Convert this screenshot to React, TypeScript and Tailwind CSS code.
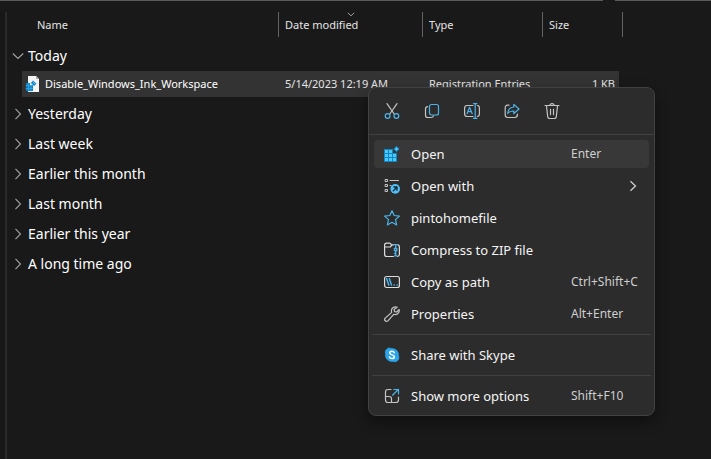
import type { ReactNode } from "react";

const groups = ["Yesterday", "Last week", "Earlier this month", "Last month", "Earlier this year", "A long time ago"];

const BLUE = "#4cb4ea";
const GREY = "#c4c4c4";

function Svg({ children, className = "" }: { children: ReactNode; className?: string }) {
  return (
    <svg viewBox="0 0 16 16" fill="none" strokeLinecap="round" strokeLinejoin="round" aria-hidden="true" className={`size-4 shrink-0 ${className}`}>
      {children}
    </svg>
  );
}

const CutIcon = () => (
  <Svg>
    <path d="M3 .7 10.2 11M13 .7 5.8 11" stroke={GREY} strokeWidth="1.2" />
    <circle cx="3.6" cy="13" r="2.4" stroke={BLUE} strokeWidth="1.2" />
    <circle cx="12.4" cy="13" r="2.4" stroke={BLUE} strokeWidth="1.2" />
  </Svg>
);

const CopyIcon = () => (
  <Svg>
    <path d="M3.6 3.6C1.900 3.800 1.500 4.600 1.500 6v6.200c0 1.600.9 2.300 2.400 2.300H7c1.400 0 2.200-.6 2.500-1.700" stroke={GREY} strokeWidth="1.200" />
    <rect x="5.500" y="1.500" width="9" height="10.500" rx="2" stroke={BLUE} strokeWidth="1.200" />
  </Svg>
);

const RenameIcon = () => (
  <Svg>
    <path d="M9 2.500H3.200C1.500 2.500.6 3.300.6 4.900v5.800c0 1.600.9 2.800 2.600 2.800H9M13.300 2.500c1.400.1 2.100 1 2.100 2.500v5.700c0 1.500-.7 2.700-2.100 2.800" stroke={GREY} strokeWidth="1.200" />
    <path d="m3 10.700 2.600-6.400 2.600 6.400M3.900 8.600h3.400" stroke={BLUE} strokeWidth="1.200" />
    <path d="M9.500.6h3.400M11.200.6v14.800M9.500 15.400h3.400" stroke={BLUE} strokeWidth="1.200" />
  </Svg>
);

const ShareIcon = () => (
  <Svg>
    <path d="M5 2.200H3.600C2 2.200 1.200 3.100 1.200 4.700v7.100c0 1.700.8 2.700 2.400 2.700h7.200c1.700 0 2.600-1 2.600-2.700V11" stroke={GREY} strokeWidth="1.200" />
    <path d="M9.800 1.400 15 6l-5.200 4.500V8C7 7.900 5 8.700 3.600 10.500 3.900 6.900 6.100 4.400 9.800 4V1.400Z" stroke={BLUE} strokeWidth="1.200" />
  </Svg>
);

const DeleteIcon = () => (
  <Svg>
    <path d="M1 2.500h14M5.900 2.500C5.900 1.400 6.700.6 8 .6s2.100.8 2.100 1.900M2.500 3l1.200 10.600c.1 1.100.8 1.900 1.800 1.900h5c1 0 1.700-.8 1.800-1.900L13.500 3M6.500 6.400v5.200M9.500 6.400v5.200" stroke={GREY} strokeWidth="1.200" />
  </Svg>
);

const OpenIcon = () => (
  <Svg>
    <path d="M0 3h9v4h4v9H0z" fill="#0f86c8" />
    <path d="M1 4h3v3H1zM5 4h3v3H5zM1 8h3v3H1zM5 8h3v3H5zM9 8h3v3H9zM1 12h3v3H1zM5 12h3v3H5zM9 12h3v3H9z" fill="#4cc8f5" />
    <path d="m12.500 0 3 3-3 3-3-3z" fill="#1796dc" />
    <path d="m12.500 1.500 1.500 1.500-1.500 1.500L11 3z" fill="#5fd0fa" />
  </Svg>
);

const OpenWithIcon = () => (
  <Svg>
    <path d="M1.500 1.500h2v2h-2zM1.500 6.500h2v2h-2zM1.500 11.500h2v2h-2z" stroke={GREY} />
    <path d="M6 2.500h8.500M6 7.500h1" stroke={GREY} />
    <circle cx="11.200" cy="10.900" r="4.800" fill="#4fc0f8" />
    <path d="m9.300 12.900 3.600-3.700M9.900 9h3.100v3.200" stroke="#17222a" strokeWidth="1.300" />
  </Svg>
);

const StarIcon = () => (
  <Svg>
    <path d="m8 .7 2.200 4.800 5.200.6-3.900 3.500 1.100 5.300L8 12.300l-4.600 2.600 1.100-5.300L.6 6.100l5.200-.6L8 .7Z" stroke={BLUE} strokeWidth="1.200" />
  </Svg>
);

const ZipIcon = () => (
  <Svg>
    <path d="M.6 5h5.600l1.700-1.900M9.500 2.900H7.600L6.500 1.700C6.200 1.400 5.700 1.200 5.200 1.200H2.600C1.300 1.200.6 2 .6 3.200v9c0 1.400.8 2.300 2.200 2.300h6.500M13.900 2.900c1 .2 1.500.9 1.500 2v7.300c0 1.300-.6 2.200-1.800 2.300" stroke="#dcdcdc" strokeWidth="1.200" />
    <path d="M10.200 2.700h3M11.700 2.700v3.500M10.400 6.500h2.400v2.200h-2.400zM11.700 9v4.200M10.400 11.300h1.200M10.400 13.800h2.600" stroke={BLUE} strokeWidth="1.300" />
  </Svg>
);

const PathIcon = () => (
  <Svg>
    <rect x=".6" y="2.500" width="14.800" height="11" rx="2" stroke="#dcdcdc" strokeWidth="1.200" />
    <path d="m2.600 4.600 2.200 6.500M5.300 4.600l2.200 6.500" stroke={BLUE} strokeWidth="1.500" />
    <path d="M10 11h.3M13 11h.3" stroke={BLUE} strokeWidth="1.500" />
  </Svg>
);

const WrenchIcon = () => (
  <Svg>
    <path d="M13.200 1.300c-2.900-1.400-6 .7-5.800 3.800 0 .5.100.9.300 1.300L1.200 12.100c-1.700 1.700.9 4.500 2.700 2.700L9.700 8.300c3.100 1.100 6.100-1.700 5.500-4.800l-2.600 2.500-2.100-.4-.5-2.100 3.200-2.200Z" stroke={GREY} strokeWidth="1.200" />
  </Svg>
);

const SkypeIcon = () => (
  <Svg>
    <path d="M5.200 1.100A4.200 4.200 0 0 0 1.500 6.800 6.500 6.500 0 0 0 9 14.400a4.200 4.200 0 0 0 5.600-5.500A6.600 6.600 0 0 0 7.100 1.500a4.200 4.200 0 0 0-1.900-.4Z" fill="#2aa5ea" stroke="#2aa5ea" strokeWidth=".6" />
    <path d="M10.300 5.700C9.900 4.700 9 4.300 8 4.300c-1.300 0-2.300.6-2.300 1.700 0 2.400 4.700 1.300 4.700 3.700 0 1.200-1 1.900-2.400 1.900-1.200 0-2.200-.5-2.500-1.600" stroke="#fff" strokeWidth="1.500" />
  </Svg>
);

const MoreIcon = () => (
  <Svg>
    <path d="M7 1.500H3.900C2.200 1.500 1.500 2.500 1.500 4v7.700c0 1.700.8 2.800 2.500 2.800h7.800c1.600 0 2.700-1.100 2.700-2.800V9M1.700 8.500h3.500c1.400 0 2.300.7 2.300 2.200v3.600" stroke={GREY} strokeWidth="1.200" />
    <path d="M8.500 7.200 14.300 1.500M9.800 1.500h4.700V6" stroke={BLUE} strokeWidth="1.200" />
  </Svg>
);

const RegFileIcon = () => (
  <Svg>
    <path d="M3 0h8l3 3v13H3z" fill="#f4f4f4" />
    <path d="M11 0v3h3z" fill="#a9a9a9" />
    <path d="M1 7h4v2h3v6H1z" fill="#0b7fc4" />
    <path d="M1 9.500h7M1 12.500h7M3.500 7v8M6 9v6" stroke="#3fb4e8" strokeWidth=".6" />
    <path d="m8 4.500 3.500 3.300-2.400 2.200-3.300-3.100z" fill="#1688cf" />
    <path d="m8 6.100 2 1.900" stroke="#8fd3f5" strokeWidth=".6" />
  </Svg>
);

function Chevron({ open = false }: { open?: boolean }) {
  return (
    <svg viewBox="0 0 12 12" fill="none" stroke="#a2a2a2" strokeWidth="1.1" aria-hidden="true" className={`size-3 shrink-0 ${open ? "rotate-90" : ""}`}>
      <path d="m3.500 .8 5 5.200-5 5.200" />
    </svg>
  );
}

function GroupRow({ label, open = false }: { label: string; open?: boolean }) {
  return (
    <tr>
      <th colSpan={4} scope="rowgroup" className="h-[30px] p-0 text-left font-normal">
        <button type="button" aria-expanded={open} className="flex h-[30px] items-center gap-1 pb-px pl-[5px] text-[14px] leading-5 text-white">
          <Chevron open={open} />
          {label}
        </button>
      </th>
    </tr>
  );
}

const actions = [
  { label: "Cut", icon: <CutIcon /> },
  { label: "Copy", icon: <CopyIcon /> },
  { label: "Rename", icon: <RenameIcon /> },
  { label: "Share", icon: <ShareIcon /> },
  { label: "Delete", icon: <DeleteIcon /> },
];

interface ItemProps {
  icon: ReactNode;
  label: string;
  shortcut?: string;
  submenu?: boolean;
  active?: boolean;
}

function MenuItem({ icon, label, shortcut, submenu, active }: ItemProps) {
  return (
    <li role="none" className="px-[5px] py-0.5">
      <button
        type="button"
        role="menuitem"
        className={`flex h-7 w-full items-center rounded pl-2.5 text-left ${active ? "bg-[#383838]" : "hover:bg-[#383838]"}`}
      >
        {icon}
        <span className="flex-1 pl-[11px] text-[13px] leading-5 text-[#f5f5f5]">{label}</span>
        {shortcut && <span className="w-[78px] text-[12px] leading-4 text-[#cfcfcf]">{shortcut}</span>}
        {submenu && (
          <svg viewBox="0 0 12 12" fill="none" stroke="#d4d4d4" strokeWidth="1.2" aria-hidden="true" className="mr-2.5 size-3">
            <path d="m3.500 1.200 5 4.800-5 4.800" />
          </svg>
        )}
      </button>
    </li>
  );
}

const Separator = () => <li role="separator" className="mx-[3px] my-1 h-px bg-[#404040]" />;

function ContextMenu() {
  return (
    <div role="menu" className="absolute top-[87px] left-[368px] w-[287px] rounded-lg border border-[#414141] bg-[#2c2c2c] shadow-[0_6px_14px_rgba(0,0,0,0.4)]">
      <div className="flex h-[47px] items-center border-b border-[#404040] px-[3px]">
        {actions.map((a) => (
          <button key={a.label} type="button" aria-label={a.label} className="flex h-8 w-10 items-center justify-center rounded hover:bg-[#383838]">
            {a.icon}
          </button>
        ))}
      </div>
      <ul role="none" className="py-[3px]">
        <MenuItem icon={<OpenIcon />} label="Open" shortcut="Enter" active />
        <MenuItem icon={<OpenWithIcon />} label="Open with" submenu />
        <MenuItem icon={<StarIcon />} label="pintohomefile" />
        <MenuItem icon={<ZipIcon />} label="Compress to ZIP file" />
        <MenuItem icon={<PathIcon />} label="Copy as path" shortcut="Ctrl+Shift+C" />
        <MenuItem icon={<WrenchIcon />} label="Properties" shortcut="Alt+Enter" />
        <Separator />
        <MenuItem icon={<SkypeIcon />} label="Share with Skype" />
        <Separator />
        <MenuItem icon={<MoreIcon />} label="Show more options" shortcut="Shift+F10" />
      </ul>
    </div>
  );
}

const headText = "flex h-[25px] items-center border-r border-[#636363] leading-4";

export default function App() {
  return (
    <div className="relative flex min-h-screen flex-col overflow-hidden bg-[#191919] font-['Noto_Sans','Open_Sans',sans-serif] text-[11px] text-[#e4e4e4]">
      <div className="flex h-px gap-3">
        <div className="w-[603px] bg-[#5a5a5a]" />
        <div className="flex-1 bg-[#5a5a5a]" />
      </div>
      <div className="flex flex-1 pt-[11px]">
        <div className="w-[7px] shrink-0 border-r-2 border-[#2b2b2b] bg-[#171717]" />
        <main className="flex-1">
          <table className="w-[616px] table-fixed border-collapse text-left">
            <colgroup>
              <col className="w-[272px]" />
              <col className="w-[144px]" />
              <col className="w-[120px]" />
              <col className="w-[80px]" />
            </colgroup>
            <thead>
              <tr>
                <th scope="col" className="p-0 pb-1 font-normal">
                  <div className={`${headText} pl-[30px]`}>Name</div>
                </th>
                <th scope="col" aria-sort="descending" className="p-0 pb-1 font-normal">
                  <div className={`${headText} relative pl-1.5`}>
                    Date modified
                    <svg viewBox="0 0 8 5" fill="none" stroke="#a0a0a0" aria-hidden="true" className="absolute top-0 left-[68px] h-[5px] w-2">
                      <path d="m.8 .8 3.200 3 3.200-3" />
                    </svg>
                  </div>
                </th>
                <th scope="col" className="p-0 pb-1 font-normal">
                  <div className={`${headText} pl-1.5`}>Type</div>
                </th>
                <th scope="col" className="p-0 pb-1 font-normal">
                  <div className={`${headText} pl-1.5`}>Size</div>
                </th>
              </tr>
            </thead>
            <tbody>
              <GroupRow label="Today" open />
              <tr>
                <td className="p-0 pb-0.5 pl-[15px]">
                  <div className="flex h-[26px] items-center gap-1 bg-[#333333] pl-[3px] text-white">
                    <RegFileIcon />
                    Disable_Windows_Ink_Workspace
                  </div>
                </td>
                <td className="p-0 pb-0.5">
                  <div className="flex h-[26px] items-center bg-[#333333] pl-1.5">5/14/2023 12:19 AM</div>
                </td>
                <td className="p-0 pb-0.5">
                  <div className="flex h-[26px] items-center bg-[#333333] pl-1.5 whitespace-nowrap">Registration Entries</div>
                </td>
                <td className="p-0 pr-1 pb-0.5">
                  <div className="flex h-[26px] items-center justify-end bg-[#333333] pr-1">1 KB</div>
                </td>
              </tr>
              {groups.map((g) => (
                <GroupRow key={g} label={g} />
              ))}
            </tbody>
          </table>
        </main>
      </div>
      <ContextMenu />
    </div>
  );
}
